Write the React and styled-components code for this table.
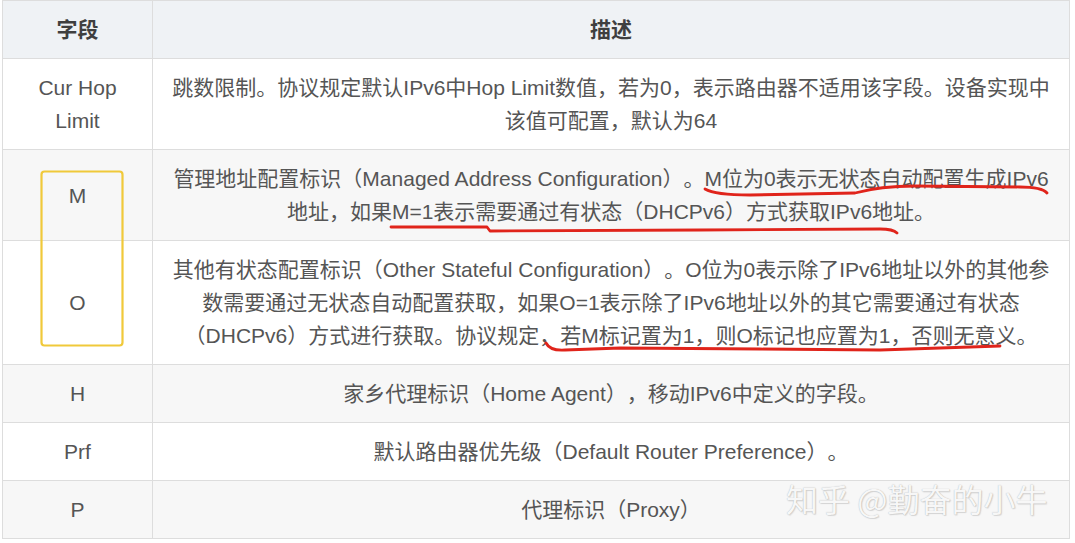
import React from "react";
import styled, { createGlobalStyle } from "styled-components";

const Global = createGlobalStyle`
  html, body {
    margin: 0;
    padding: 0;
    background: #ffffff;
    overflow: hidden;
  }
  body {
    font-family: "Liberation Sans", "Noto Sans CJK SC", sans-serif;
    text-spacing-trim: space-all;
  }
`;

const Page = styled.div`
  position: relative;
  width: 1075px;
  height: 543px;
  overflow: hidden;
`;

const Table = styled.table`
  margin-left: 2px;
  width: 1068px;
  border-collapse: collapse;
  table-layout: fixed;
  font-size: 21px;
  line-height: 33px;
  color: #555555;
  text-spacing-trim: space-all;
`;

const FieldCol = styled.col`
  width: 150px;
`;

const HeadCell = styled.th`
  background: #eff2f5;
  color: #3f3f3f;
  font-weight: bold;
  padding: 12px 14px;
  border: 1px solid #dddddd;
  text-align: center;
`;

const Row = styled.tr`
  background: ${(p) => (p.$shade ? "#f7f7f7" : "#ffffff")};
`;

const FieldCell = styled.td`
  padding: 12px 14px;
  border: 1px solid #dddddd;
  text-align: center;
  vertical-align: middle;
`;

const DescCell = styled.td`
  padding: 12px 6px;
  border: 1px solid #dddddd;
  text-align: center;
  vertical-align: middle;
  white-space: nowrap;
`;

const Overlay = styled.svg`
  position: absolute;
  left: 0;
  top: 0;
  pointer-events: none;
`;

const Watermark = styled.div`
  position: absolute;
  left: 786px;
  top: 478px;
  font-family: "Noto Sans CJK SC", "Liberation Sans", sans-serif;
  font-size: 32px;
  line-height: 40px;
  color: #f7f7f7;
  text-shadow: 0 0 1px rgba(90, 90, 90, 0.45), 1px 1px 1px rgba(150, 150, 150, 0.3);
  white-space: nowrap;
  pointer-events: none;
`;

const rows = [
  {
    f: ["Cur Hop", "Limit"],
    d: [
      "跳数限制。协议规定默认IPv6中Hop Limit数值，若为0，表示路由器不适用该字段。设备实现中",
      "该值可配置，默认为64",
    ],
  },
  {
    f: ["M"],
    d: [
      "管理地址配置标识（Managed Address Configuration）。M位为0表示无状态自动配置生成IPv6",
      "地址，如果M=1表示需要通过有状态（DHCPv6）方式获取IPv6地址。",
    ],
  },
  {
    f: ["O"],
    d: [
      "其他有状态配置标识（Other Stateful Configuration）。O位为0表示除了IPv6地址以外的其他参",
      "数需要通过无状态自动配置获取，如果O=1表示除了IPv6地址以外的其它需要通过有状态",
      "（DHCPv6）方式进行获取。协议规定，若M标记置为1，则O标记也应置为1，否则无意义。",
    ],
  },
  { f: ["H"], d: ["家乡代理标识（Home Agent），移动IPv6中定义的字段。"] },
  { f: ["Prf"], d: ["默认路由器优先级（Default Router Preference）。"] },
  { f: ["P"], d: ["代理标识（Proxy）"] },
];

const Lines = ({ items }) =>
  items.map((t, i) => (
    <React.Fragment key={i}>
      {i > 0 && <br />}
      {t}
    </React.Fragment>
  ));

export default function App() {
  return (
    <Page>
      <Global />
      <Table>
        <colgroup>
          <FieldCol />
          <col />
        </colgroup>
        <thead>
          <tr>
            <HeadCell>字段</HeadCell>
            <HeadCell>描述</HeadCell>
          </tr>
        </thead>
        <tbody>
          {rows.map((r, i) => (
            <Row key={i} $shade={i % 2 === 1}>
              <FieldCell>
                <Lines items={r.f} />
              </FieldCell>
              <DescCell>
                <Lines items={r.d} />
              </DescCell>
            </Row>
          ))}
        </tbody>
      </Table>

      <Overlay width="1075" height="543" viewBox="0 0 1075 543">
        <rect x="41.5" y="171.5" width="81" height="174" rx="3" fill="none" stroke="#f0c93a" strokeWidth="2.2" />
        <g fill="none" stroke="#e0241b" strokeWidth="2.8" strokeLinecap="round" strokeLinejoin="round">
          <path d="M705 189 Q715 195 750 195 L855 193 Q880 186 915 186 L1020 187 Q1042 187 1047 193" />
          <path d="M391 227 L487 227 L490 231 L700 230 L880 229 Q893 229 897 233" />
          <path d="M546 343 Q550 351 565 350 L620 348 L760 349 L880 350 L1000 346" />
        </g>
      </Overlay>

      <Watermark>知乎 @勤奋的小牛</Watermark>
    </Page>
  );
}
